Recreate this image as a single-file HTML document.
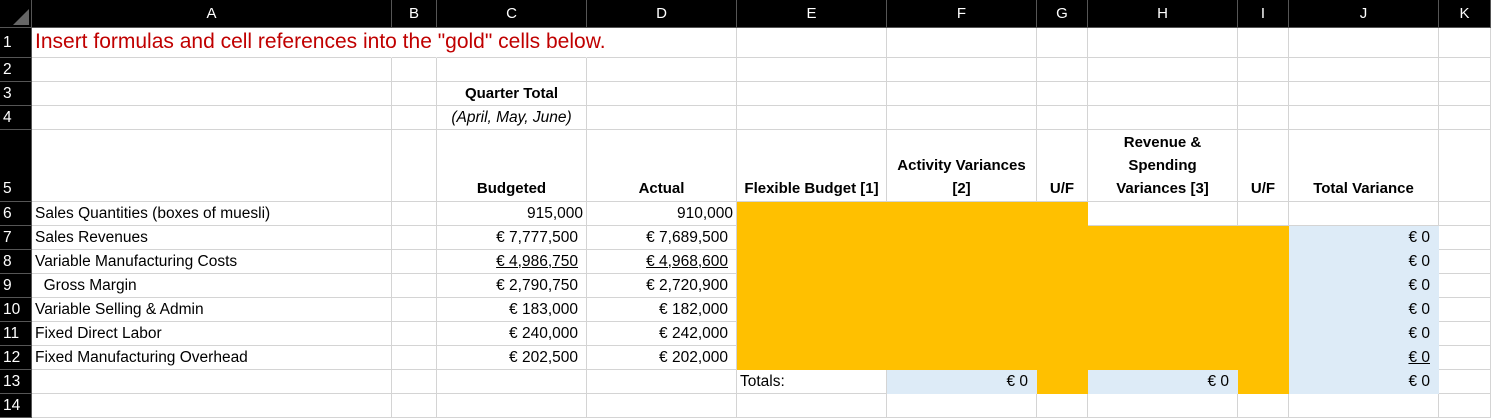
<!DOCTYPE html>
<html><head><meta charset="utf-8"><style>
html,body{margin:0;padding:0;background:#fff;width:1491px;height:418px;overflow:hidden}
table{border-collapse:separate;border-spacing:0;table-layout:fixed;font-family:"Liberation Sans",sans-serif;font-size:15.5px;color:#000}
td{border-right:1px solid #d4d4d4;border-bottom:1px solid #d4d4d4;padding:0 3px;white-space:nowrap;overflow:hidden;box-sizing:border-box;line-height:16px}
tr.h td{background:#000;color:#fff;text-align:center;border-right:1px solid #555;border-bottom:1px solid #555;font-size:15px}
td.n{background:#000;color:#fff;border-right:1px solid #555;border-bottom:1px solid #555;padding-left:3px;font-size:15.5px}
.g{background:#ffc000;border-color:#ffc000}
.b{background:#ddebf7;border-color:#ddebf7}
.r{text-align:right}.c{text-align:center}.bo{font-weight:bold;font-size:15px}
.cur{text-align:right;padding-right:8px}
.u{text-decoration:underline}
td.v{vertical-align:bottom;padding-bottom:4px}
td.v3{vertical-align:bottom;padding-bottom:1px;line-height:23px}
td.nb{border-right-color:transparent}
</style></head><body>
<table>
<colgroup><col style="width:32px"><col style="width:360px"><col style="width:45px"><col style="width:150px"><col style="width:150px"><col style="width:150px"><col style="width:150px"><col style="width:51px"><col style="width:150px"><col style="width:51px"><col style="width:150px"><col style="width:52px"></colgroup>
<tr class="h" style="height:28px"><td style="position:relative"><svg width="16" height="16" style="position:absolute;right:2px;bottom:2px"><polygon points="16,0 16,16 0,16" fill="#666"/></svg></td><td>A</td><td>B</td><td>C</td><td>D</td><td>E</td><td>F</td><td>G</td><td>H</td><td>I</td><td>J</td><td>K</td></tr>
<tr style="height:30px"><td class="n">1</td><td class="nb" style="color:#c00000;font-size:21px;overflow:visible;position:relative"><span style="position:absolute;left:3px;top:6px;z-index:2">Insert formulas and cell references into the "gold" cells below.</span></td><td class="nb"></td><td class="nb"></td><td></td><td></td><td></td><td></td><td></td><td></td><td></td><td></td></tr>
<tr style="height:24px"><td class="n">2</td><td></td><td></td><td></td><td></td><td></td><td></td><td></td><td></td><td></td><td></td><td></td></tr>
<tr style="height:24px"><td class="n">3</td><td></td><td></td><td class="c bo">Quarter Total</td><td></td><td></td><td></td><td></td><td></td><td></td><td></td><td></td></tr>
<tr style="height:24px"><td class="n">4</td><td></td><td></td><td class="c" style="font-style:italic">(April, May, June)</td><td></td><td></td><td></td><td></td><td></td><td></td><td></td><td></td></tr>
<tr style="height:72px"><td class="n v">5</td><td></td><td></td><td class="c bo v">Budgeted</td><td class="c bo v">Actual</td><td class="c bo v">Flexible Budget [1]</td><td class="c bo v3">Activity Variances<br>[2]</td><td class="c bo v">U/F</td><td class="c bo v3">Revenue &amp;<br>Spending<br>Variances [3]</td><td class="c bo v">U/F</td><td class="c bo v">Total Variance</td><td></td></tr>
<tr style="height:24px"><td class="n">6</td><td>Sales Quantities (boxes of muesli)</td><td></td><td class="r">915,000</td><td class="r">910,000</td><td class="g"></td><td class="g"></td><td class="g"></td><td></td><td></td><td></td><td></td></tr>
<tr style="height:24px"><td class="n">7</td><td>Sales Revenues</td><td></td><td class="cur">€ 7,777,500</td><td class="cur">€ 7,689,500</td><td class="g"></td><td class="g"></td><td class="g"></td><td class="g"></td><td class="g"></td><td class="b cur">€ 0</td><td></td></tr>
<tr style="height:24px"><td class="n">8</td><td>Variable Manufacturing Costs</td><td></td><td class="cur"><span class="u">€ 4,986,750</span></td><td class="cur"><span class="u">€ 4,968,600</span></td><td class="g"></td><td class="g"></td><td class="g"></td><td class="g"></td><td class="g"></td><td class="b cur">€ 0</td><td></td></tr>
<tr style="height:24px"><td class="n">9</td><td>&nbsp;&nbsp;Gross Margin</td><td></td><td class="cur">€ 2,790,750</td><td class="cur">€ 2,720,900</td><td class="g"></td><td class="g"></td><td class="g"></td><td class="g"></td><td class="g"></td><td class="b cur">€ 0</td><td></td></tr>
<tr style="height:24px"><td class="n">10</td><td>Variable Selling &amp; Admin</td><td></td><td class="cur">€ 183,000</td><td class="cur">€ 182,000</td><td class="g"></td><td class="g"></td><td class="g"></td><td class="g"></td><td class="g"></td><td class="b cur">€ 0</td><td></td></tr>
<tr style="height:24px"><td class="n">11</td><td>Fixed Direct Labor</td><td></td><td class="cur">€ 240,000</td><td class="cur">€ 242,000</td><td class="g"></td><td class="g"></td><td class="g"></td><td class="g"></td><td class="g"></td><td class="b cur">€ 0</td><td></td></tr>
<tr style="height:24px"><td class="n">12</td><td>Fixed Manufacturing Overhead</td><td></td><td class="cur">€ 202,500</td><td class="cur">€ 202,000</td><td class="g"></td><td class="g"></td><td class="g"></td><td class="g"></td><td class="g"></td><td class="b cur"><span class="u">€ 0</span></td><td></td></tr>
<tr style="height:24px"><td class="n">13</td><td></td><td></td><td></td><td></td><td>Totals:</td><td class="b cur">€ 0</td><td class="g"></td><td class="b cur">€ 0</td><td class="g"></td><td class="b cur">€ 0</td><td></td></tr>
<tr style="height:24px"><td class="n">14</td><td></td><td></td><td></td><td></td><td></td><td></td><td></td><td></td><td></td><td></td><td></td></tr>
</table>
</body></html>
